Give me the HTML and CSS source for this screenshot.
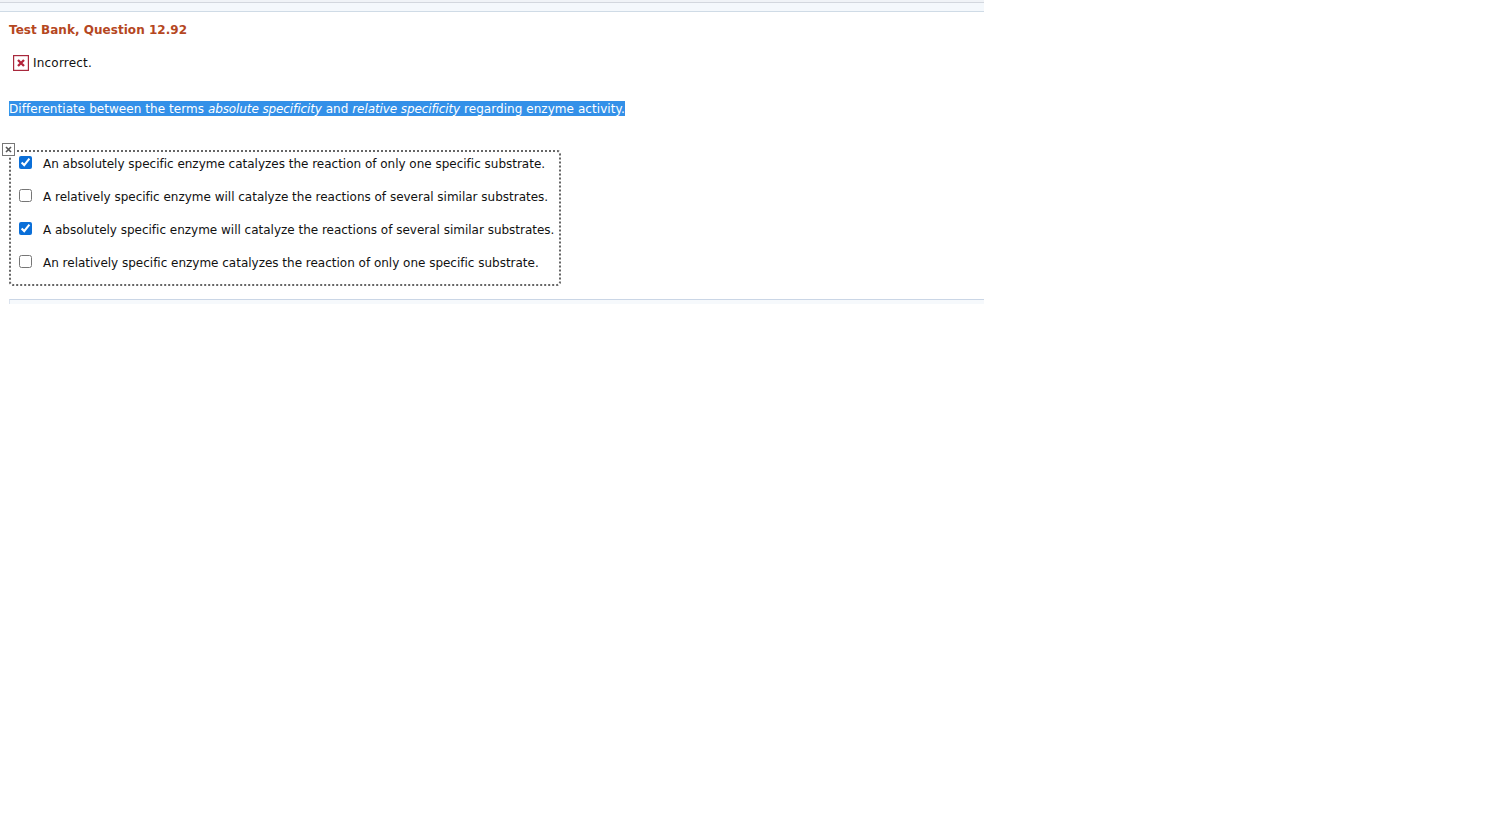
FILE: index.html
```html
<!DOCTYPE html>
<html lang="en">
<head>
<meta charset="utf-8">
<title>Test Bank, Question 12.92</title>
<link rel="stylesheet" href="styles.css">
</head>
<body>
<main class="page">
  <div class="top-bar"></div>
  <div class="content">
    <h1 class="title">Test Bank, Question 12.92</h1>
    <div class="result">
      <svg class="result-icon" width="16" height="16" viewBox="0 0 16 16" aria-hidden="true"><rect x="0.6" y="0.6" width="14.8" height="14.8" fill="#fff" stroke="#a8283c" stroke-width="1.2"/><path d="M5 5l6 6M11 5l-6 6" stroke="#b3233a" stroke-width="2.3" fill="none"/></svg>
      <span class="result-text">Incorrect.</span>
    </div>
    <p class="question"><span class="selected">Differentiate between the terms <em>absolute specificity</em> and <em>relative specificity</em> regarding enzyme activity.</span></p>
    <div class="answers">
      <svg class="answers-mark" width="13" height="13" viewBox="0 0 13 13" aria-hidden="true"><rect x="0.5" y="0.5" width="12" height="12" fill="#fff" stroke="#777"/><path d="M4 4l5 5M9 4l-5 5" stroke="#555" stroke-width="1.6" fill="none"/></svg>
      <label class="answer"><input type="checkbox" checked><span>An absolutely specific enzyme catalyzes the reaction of only one specific substrate.</span></label>
      <label class="answer"><input type="checkbox"><span>A relatively specific enzyme will catalyze the reactions of several similar substrates.</span></label>
      <label class="answer"><input type="checkbox" checked><span>A absolutely specific enzyme will catalyze the reactions of several similar substrates.</span></label>
      <label class="answer"><input type="checkbox"><span>An relatively specific enzyme catalyzes the reaction of only one specific substrate.</span></label>
    </div>
    <div class="bottom-bar"></div>
  </div>
</main>
</body>
</html>
```
FILE: styles.css
```css
html, body { margin: 0; padding: 0; background: #fff; }
body { font-family: "DejaVu Sans", Verdana, sans-serif; font-size: 12px; color: #111; }
.page { width: 984px; }
.top-bar { height: 9px; border-top: 2px solid #f0f3f7; border-bottom: 1px solid #cfdbe6; background: #f4f8fc; box-shadow: inset 0 1px 0 #d3d7de; }
.content { padding-left: 9px; }
.title { margin: 0; padding-top: 10px; font-size: 12px; line-height: 16px; font-weight: bold; letter-spacing: 0.04px; color: #b5471f; }
.result { display: flex; align-items: center; gap: 4px; margin-top: 17px; margin-left: 4px; line-height: 16px; }
.result-icon { display: block; flex: none; }
.result-text { letter-spacing: 0.2px; }
.question { margin: 31px 0 0; line-height: 15px; }
.selected { padding: 1px 0 0; background: #3390e8; color: #fff; letter-spacing: 0.055px; }
.selected em { letter-spacing: -0.1px; }
.answers { position: relative; display: flex; flex-direction: column; gap: 18px; width: 548px; margin-top: 33px; padding: 4px 0 14px; border: 2px dotted #666; border-radius: 4px; }
.answers-mark { position: absolute; left: -9px; top: -9px; }
.answer { display: flex; align-items: center; height: 15px; letter-spacing: -0.01px; }
.answer input { width: 13px; height: 13px; margin: 0 11px 2px 8px; accent-color: #0b6fd8; }
.bottom-bar { height: 4px; margin-top: 13px; border-top: 1px solid #cad6e6; border-left: 1px solid #dbe3ee; background: #f6f9fc; }
```
